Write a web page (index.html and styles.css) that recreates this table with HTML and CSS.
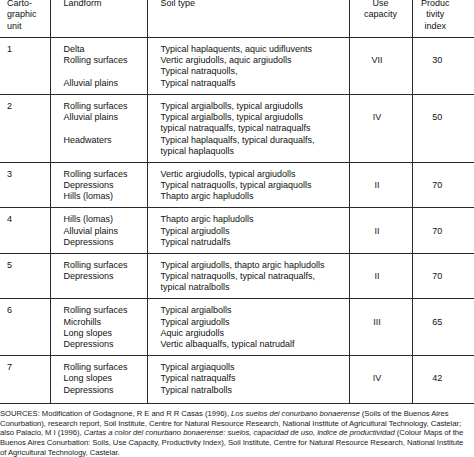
FILE: index.html
```html
<!DOCTYPE html>
<html lang="en">
<head>
<meta charset="utf-8">
<title>Soil table</title>
<link rel="stylesheet" href="styles.css">
</head>
<body>
<div class="page">
  <table class="soil-table">
    <colgroup>
      <col class="c-unit">
      <col class="c-land">
      <col class="c-soil">
      <col class="c-use">
      <col class="c-prod">
    </colgroup>
    <thead>
      <tr>
        <th class="unit">Carto-<br>graphic<br>unit</th>
        <th class="land">Landform</th>
        <th class="soil">Soil type</th>
        <th class="use">Use<br>capacity</th>
        <th class="prod">Produc<br>tivity<br>index</th>
      </tr>
    </thead>
    <tbody>
      <tr>
        <td class="unit">1</td>
        <td class="land">Delta<br>Rolling surfaces<br>&nbsp;<br>Alluvial plains</td>
        <td class="soil">Typical haplaquents, aquic udifluvents<br>Vertic argiudolls, aquic argiudolls<br>Typical natraquolls,<br>Typical natraqualfs</td>
        <td class="use"><span class="second">VII</span></td>
        <td class="prod"><span class="second">30</span></td>
      </tr>
      <tr>
        <td class="unit">2</td>
        <td class="land">Rolling surfaces<br>Alluvial plains<br>&nbsp;<br>Headwaters<br>&nbsp;</td>
        <td class="soil">Typical argialbolls, typical argiudolls<br>Typical argialbolls, typical argiudolls<br>typical natraqualfs, typical natraqualfs<br>Typical haplaqualfs, typical duraqualfs,<br>typical haplaquolls</td>
        <td class="use"><span class="second">IV</span></td>
        <td class="prod"><span class="second">50</span></td>
      </tr>
      <tr>
        <td class="unit">3</td>
        <td class="land">Rolling surfaces<br>Depressions<br>Hills (lomas)</td>
        <td class="soil">Vertic argiudolls, typical argiudolls<br>Typical natraquolls, typical argiaquolls<br>Thapto argic hapludolls</td>
        <td class="use"><span class="second">II</span></td>
        <td class="prod"><span class="second">70</span></td>
      </tr>
      <tr>
        <td class="unit">4</td>
        <td class="land">Hills (lomas)<br>Alluvial plains<br>Depressions</td>
        <td class="soil">Thapto argic hapludolls<br>Typical argiudolls<br>Typical natrudalfs</td>
        <td class="use"><span class="second">II</span></td>
        <td class="prod"><span class="second">70</span></td>
      </tr>
      <tr>
        <td class="unit">5</td>
        <td class="land">Rolling surfaces<br>Depressions</td>
        <td class="soil">Typical argiudolls, thapto argic hapludolls<br>Typical natraquolls, typical natraqualfs,<br>typical natralbolls</td>
        <td class="use"><span class="second">II</span></td>
        <td class="prod"><span class="second">70</span></td>
      </tr>
      <tr>
        <td class="unit">6</td>
        <td class="land">Rolling surfaces<br>Microhills<br>Long slopes<br>Depressions</td>
        <td class="soil">Typical argialbolls<br>Typical argiudolls<br>Aquic argiudolls<br>Vertic albaqualfs, typical natrudalf</td>
        <td class="use"><span class="second">III</span></td>
        <td class="prod"><span class="second">65</span></td>
      </tr>
      <tr class="last">
        <td class="unit">7</td>
        <td class="land">Rolling surfaces<br>Long slopes<br>Depressions</td>
        <td class="soil">Typical argiaquolls<br>Typical natraqualfs<br>Typical natralbolls</td>
        <td class="use"><span class="second">IV</span></td>
        <td class="prod"><span class="second">42</span></td>
      </tr>
    </tbody>
  </table>
  <p class="sources">
    <span class="line">SOURCES: Modification of Godagnone, R E and R R Casas (1996), <i>Los suelos del conurbano bonaerense</i> (Soils of the Buenos Aires</span>
    <span class="line">Conurbation), research report, Soil Institute, Centre for Natural Resource Research, National Institute of Agricultural Technology, Castelar;</span>
    <span class="line">also Palacio, M I (1996), <i>Cartas a color del conurbano bonaerense: suelos, capacidad de uso, indice de productividad</i> (Colour Maps of the</span>
    <span class="line">Buenos Aires Conurbation: Soils, Use Capacity, Productivity Index), Soil Institute, Centre for Natural Resource Research, National Institute</span>
    <span class="line">of Agricultural Technology, Castelar.</span>
  </p>
</div>
</body>
</html>
```

FILE: styles.css
```css
html, body {
  margin: 0;
  padding: 0;
  background: #ffffff;
}

body {
  font-family: "Liberation Sans", Arial, sans-serif;
  color: #111111;
  overflow: hidden;
}

.page {
  width: 474px;
  height: 457px;
  overflow: hidden;
}

.soil-table {
  width: 474px;
  table-layout: fixed;
  border-collapse: collapse;
  margin-top: -2px;
  font-size: 9px;
  line-height: 11.3px;
}

.c-unit { width: 50px; }
.c-land { width: 97px; }
.c-soil { width: 202px; }
.c-use  { width: 63px; }
.c-prod { width: 62px; }

.soil-table th,
.soil-table td {
  vertical-align: top;
  text-align: left;
  font-weight: normal;
  white-space: nowrap;
  padding: 6px 0 4.6px 0;
}

.soil-table th {
  padding-top: 0;
  padding-bottom: 5px;
  border-bottom: 1px solid #2a2a2a;
}

.soil-table tbody tr {
  border-bottom: 1px solid #2a2a2a;
}

.soil-table .land,
.soil-table .soil,
.soil-table .use,
.soil-table .prod {
  border-left: 1px solid #2a2a2a;
}

.soil-table .unit { padding-left: 7px; }
.soil-table .land { padding-left: 13px; }
.soil-table .soil { padding-left: 13px; }

.soil-table .use {
  text-align: center;
  padding-right: 7px;
}
.soil-table .prod {
  text-align: center;
  padding-right: 12px;
}

.soil-table th.use { padding-right: 0; }
.soil-table th.prod { padding-right: 16px; }

.second {
  display: block;
  padding-top: 11.3px;
}

.soil-table tr.last td {
  padding-bottom: 7px;
}

.sources {
  margin: 5px 0 0 0;
  font-size: 7.7px;
  letter-spacing: -0.05px;
  line-height: 9.7px;
  color: #1a1a1a;
}

.sources .line {
  display: block;
  white-space: nowrap;
}
```
